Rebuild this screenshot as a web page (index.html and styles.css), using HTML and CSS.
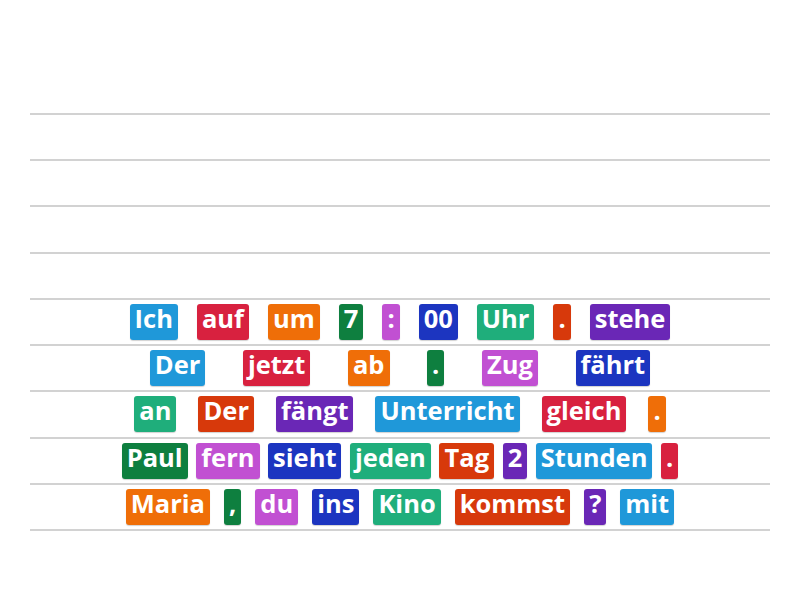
FILE: index.html
```html
<!DOCTYPE html>
<html lang="de">
<head>
<meta charset="utf-8">
<title>Satzbau</title>
<link rel="stylesheet" href="styles.css">
</head>
<body>
<main class="board">
  <div class="slot"></div>
  <div class="slot"></div>
  <div class="slot"></div>
  <div class="slot"></div>
  <div class="slot"><div class="row gap-19">
    <span class="tile blue">Ich</span><span class="tile red">auf</span><span class="tile orange">um</span><span class="tile dgreen">7</span><span class="tile magenta">:</span><span class="tile navy">00</span><span class="tile green">Uhr</span><span class="tile rust">.</span><span class="tile purple">stehe</span>
  </div></div>
  <div class="slot"><div class="row gap-37">
    <span class="tile blue">Der</span><span class="tile red">jetzt</span><span class="tile orange">ab</span><span class="tile dgreen">.</span><span class="tile magenta">Zug</span><span class="tile navy">fährt</span>
  </div></div>
  <div class="slot"><div class="row gap-22">
    <span class="tile green">an</span><span class="tile rust">Der</span><span class="tile purple">fängt</span><span class="tile blue">Unterricht</span><span class="tile red">gleich</span><span class="tile orange">.</span>
  </div></div>
  <div class="slot"><div class="row gap-8">
    <span class="tile dgreen">Paul</span><span class="tile magenta">fern</span><span class="tile navy">sieht</span><span class="tile green">jeden</span><span class="tile rust">Tag</span><span class="tile purple">2</span><span class="tile blue">Stunden</span><span class="tile red">.</span>
  </div></div>
  <div class="slot last"><div class="row gap-14">
    <span class="tile orange">Maria</span><span class="tile dgreen">,</span><span class="tile magenta">du</span><span class="tile navy">ins</span><span class="tile green">Kino</span><span class="tile rust">kommst</span><span class="tile purple">?</span><span class="tile blue">mit</span>
  </div></div>
</main>
</body>
</html>
```
FILE: styles.css
```css
html, body {
  margin: 0;
  padding: 0;
  background: #ffffff;
}
body {
  width: 800px;
  height: 600px;
  overflow: hidden;
  font-family: "Open Sans", "DejaVu Sans", sans-serif;
}
.board {
  margin: 113px 30px 0 30px;
  width: 740px;
}
.slot {
  box-sizing: border-box;
  height: 46.22px;
  border-top: 2px solid #d2d2d2;
  padding-top: 4px;
}
.slot.last {
  border-bottom: 2px solid #d2d2d2;
  height: 48.22px;
}
.row {
  display: flex;
  justify-content: center;
}
.gap-19 { gap: 19px; }
.gap-37 { gap: 37.6px; }
.gap-22 { gap: 22px; }
.gap-8 { gap: 8.6px; }
.gap-14 { gap: 14px; }
.tile {
  box-sizing: border-box;
  height: 36px;
  padding: 0 5px 8px 5px;
  line-height: 28px;
  font-size: 25.5px;
  font-weight: 700;
  color: #ffffff;
  border-radius: 3px;
  box-shadow: 0 1px 1px rgba(0, 0, 0, 0.18);
  white-space: nowrap;
}
.blue { background: #1f98d9; }
.red { background: #d8213f; }
.orange { background: #ef6e08; }
.dgreen { background: #0e7f3f; }
.magenta { background: #c150d2; }
.navy { background: #1c35c0; }
.green { background: #1fae7b; }
.rust { background: #d7390b; }
.purple { background: #6a27b6; }
```
